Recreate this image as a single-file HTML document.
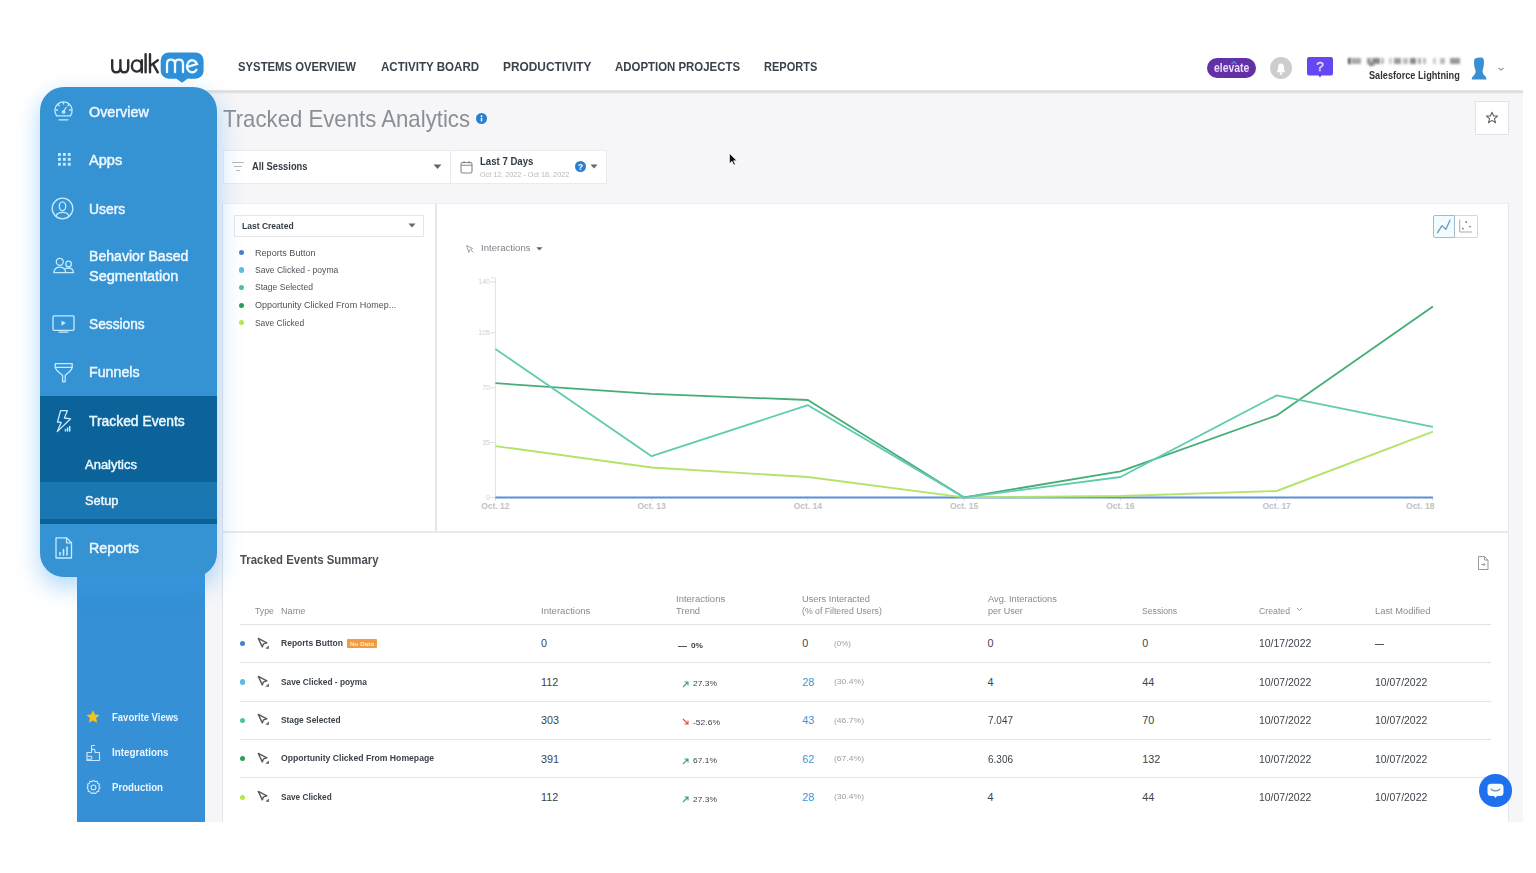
<!DOCTYPE html>
<html><head><meta charset="utf-8">
<style>
*{box-sizing:border-box;margin:0;padding:0}
html,body{width:1536px;height:873px;overflow:hidden;background:#fff;font-family:"Liberation Sans",sans-serif}
.a{position:absolute;white-space:nowrap}
</style></head><body>
<div class="a" style="left:0px;top:0px;width:1536px;height:873px;background:#fff;"></div>
<div class="a" style="left:205px;top:92px;width:1318px;height:730px;background:#f6f5f8;"></div>
<div class="a" style="left:77px;top:90px;width:1446px;height:4px;background:linear-gradient(#e9e9e9,#dcdcdc 45%,#e6e6e6 70%,#f3f3f5);"></div>
<div class="a" style="left:77px;top:92px;width:128px;height:730px;background:#3590d5;"></div>
<svg class="a" style="left:0;top:0" width="220" height="90" viewBox="0 0 220 90">
 <g fill="none" stroke="#2e2e32" stroke-width="2.4" stroke-linecap="round">
  <path d="M112.2 60.2V67.4Q112.2 72.3 116.3 72.3Q120.4 72.3 120.4 67.4V60.2M120.4 67.4Q120.4 72.3 124.3 72.3Q128.2 72.3 128.2 67.4V60.2"/>
  <ellipse cx="136.8" cy="66" rx="4.9" ry="5.6"/>
  <path d="M141.8 60.2V72.3M145.6 54.2V72.3M150 54.2V72.3M150.4 65.6L157.8 60.2M153.3 64.4L157.8 72.3"/>
 </g>
 <path d="M169 52.4H195.6A8 8 0 0 1 203.6 60.4V70.7A8 8 0 0 1 195.6 78.7H187.5L182 82.8L176.5 78.7H168.7A8 8 0 0 1 160.7 70.7V60.4A8 8 0 0 1 168.7 52.4Z" fill="#2f8fd8"/>
 <g fill="none" stroke="#eefaff" stroke-width="2.3" stroke-linecap="round">
  <path d="M167 72.2V63.8Q167 59.6 171 59.6Q175 59.6 175 63.8V72.2M175 63.8Q175 59.6 179 59.6Q183 59.6 183 63.8V72.2"/>
  <path d="M187.4 66.8L197 64A5.2 6 0 1 0 196.4 69.8"/>
 </g>
</svg>
<div id="t1" class="a" style="left:238.1px;top:59.6px;font-size:13px;line-height:13px;color:#3a434d;font-weight:bold;transform:scaleX(0.8703);transform-origin:0 0;">SYSTEMS OVERVIEW</div>
<div id="t2" class="a" style="left:380.6px;top:59.6px;font-size:13px;line-height:13px;color:#3a434d;font-weight:bold;transform:scaleX(0.8906);transform-origin:0 0;">ACTIVITY BOARD</div>
<div id="t3" class="a" style="left:502.7px;top:59.6px;font-size:13px;line-height:13px;color:#3a434d;font-weight:bold;transform:scaleX(0.9143);transform-origin:0 0;">PRODUCTIVITY</div>
<div id="t4" class="a" style="left:615.0px;top:59.6px;font-size:13px;line-height:13px;color:#3a434d;font-weight:bold;transform:scaleX(0.8784);transform-origin:0 0;">ADOPTION PROJECTS</div>
<div id="t5" class="a" style="left:764.4px;top:59.6px;font-size:13px;line-height:13px;color:#3a434d;font-weight:bold;transform:scaleX(0.8481);transform-origin:0 0;">REPORTS</div>
<div class="a" style="left:1207px;top:58px;width:49px;height:20px;border-radius:10px;background:#6330a6"></div>
<div id="t6" class="a" style="left:1214.1px;top:60.5px;font-size:13.5px;line-height:13.5px;color:#e9dcff;font-weight:bold;transform:scaleX(0.7730);transform-origin:0 0;">elevate</div>
<svg class="a" style="left:1230px;top:60px" width="8" height="5" viewBox="0 0 8 5"><path d="M1.5 4L4 1.5L6.5 4" fill="none" stroke="#4a8ff0" stroke-width="1.2"/></svg>
<div class="a" style="left:1270px;top:57px;width:22px;height:22px;border-radius:50%;background:#cdcdcd"></div>
<svg class="a" style="left:1270px;top:57px" width="22" height="22" viewBox="0 0 22 22"><path d="M6.8 15.2Q8 13.8 8 10.5Q8 6.6 11 6.6Q14 6.6 14 10.5Q14 13.8 15.2 15.2Z" fill="#fff"/><circle cx="11" cy="16.6" r="1.3" fill="#fff"/></svg>
<svg class="a" style="left:1306px;top:56px" width="28" height="23" viewBox="0 0 28 23"><path d="M3 1H25Q27 1 27 3V17.5Q27 19.5 25 19.5H15.5L14 21.5L12.5 19.5H3Q1 19.5 1 17.5V3Q1 1 3 1Z" fill="#6747f2"/><text x="14" y="15" fill="#e8e2ff" font-family="Liberation Sans" font-size="13.5" text-anchor="middle" stroke="#e8e2ff" stroke-width="0.3">?</text></svg>
<div class="a" style="left:1348px;top:57.5px;width:3px;height:6.5px;filter:blur(1px);background:#555"></div>
<div class="a" style="left:1351px;top:57.5px;width:10px;height:6.5px;filter:blur(1px);background:#aaa"></div>
<div class="a" style="left:1367px;top:57.5px;width:4px;height:6.5px;filter:blur(1px);background:#999"></div>
<div class="a" style="left:1372px;top:57.5px;width:8px;height:6.5px;filter:blur(1px);background:#888"></div>
<div class="a" style="left:1381px;top:57.5px;width:3px;height:6.5px;filter:blur(1px);background:#bbb"></div>
<div class="a" style="left:1389px;top:57.5px;width:3px;height:6.5px;filter:blur(1px);background:#ccc"></div>
<div class="a" style="left:1394px;top:57.5px;width:7px;height:6.5px;filter:blur(1px);background:#999"></div>
<div class="a" style="left:1403px;top:57.5px;width:5px;height:6.5px;filter:blur(1px);background:#bbb"></div>
<div class="a" style="left:1410px;top:57.5px;width:6px;height:6.5px;filter:blur(1px);background:#888"></div>
<div class="a" style="left:1418px;top:57.5px;width:3px;height:6.5px;filter:blur(1px);background:#aaa"></div>
<div class="a" style="left:1423px;top:57.5px;width:3px;height:6.5px;filter:blur(1px);background:#bbb"></div>
<div class="a" style="left:1433px;top:57.5px;width:3px;height:6.5px;filter:blur(1px);background:#ccc"></div>
<div class="a" style="left:1440px;top:57.5px;width:5px;height:6.5px;filter:blur(1px);background:#bbb"></div>
<div class="a" style="left:1450px;top:57.5px;width:10px;height:6.5px;filter:blur(1px);background:#999"></div>
<div class="a" style="left:1369px;top:62px;width:5px;height:4px;filter:blur(1px);background:#888"></div>
<div id="t7" class="a" style="left:1368.7px;top:71.1px;font-size:10px;line-height:10px;color:#333;font-weight:bold;transform:scaleX(0.9180);transform-origin:0 0;">Salesforce Lightning</div>
<svg class="a" style="left:1468px;top:55px" width="22" height="26" viewBox="0 0 22 26"><path d="M6.5 4Q9 2.4 13.5 2.6Q16.2 3 16 7.5Q15.8 12.5 14.6 15.5Q14.4 18.5 16 20Q18.5 21.5 18.6 24.6H3.6Q3.8 21.5 6.2 20Q8 18.5 7.6 15.5Q6 12.5 6 8Q6 5 6.5 4Z" fill="#3a8fd3"/></svg>
<svg class="a" style="left:1497px;top:66px" width="8" height="6" viewBox="0 0 8 6"><path d="M1.5 2L4 4L6.5 2" fill="none" stroke="#999" stroke-width="1.1"/></svg>
<div id="t8" class="a" style="left:223.2px;top:106.6px;font-size:24px;line-height:24px;color:#8a8f96;font-weight:normal;transform:scaleX(0.9243);transform-origin:0 0;">Tracked Events Analytics</div>
<div class="a" style="left:475.5px;top:112.8px;width:11px;height:11px;border-radius:50%;background:#2a7fd0"></div>
<svg class="a" style="left:475.5px;top:112.8px" width="11" height="11" viewBox="0 0 11 11"><circle cx="5.5" cy="3.2" r="0.9" fill="#fff"/><path d="M5.5 4.8V8.4" stroke="#fff" stroke-width="1.5"/></svg>
<div class="a" style="left:1475px;top:100.5px;width:34px;height:34.5px;background:#fff;border:1px solid #e2e2e6"></div>
<svg class="a" style="left:1484px;top:110px" width="16" height="16" viewBox="0 0 16 16"><path d="M8 2.2L9.6 6H13.6L10.4 8.6L11.6 12.8L8 10.4L4.4 12.8L5.6 8.6L2.4 6H6.4Z" fill="none" stroke="#666" stroke-width="1.1" stroke-linejoin="round"/></svg>
<div class="a" style="left:223px;top:150px;width:383.5px;height:33.5px;background:#fff;border:1px solid #ebeaee"></div>
<div class="a" style="left:450px;top:150px;width:1px;height:33.5px;background:#ebeaee;"></div>
<svg class="a" style="left:230px;top:160px" width="16" height="14" viewBox="0 0 16 14"><path d="M2 2.5H14M4 6.5H12M6 10.5H10" stroke="#b8b8b8" stroke-width="1.2"/></svg>
<div id="t9" class="a" style="left:251.5px;top:161.3px;font-size:11px;line-height:11px;color:#333b45;font-weight:bold;transform:scaleX(0.8483);transform-origin:0 0;">All Sessions</div>
<svg class="a" style="left:433px;top:164px" width="9" height="6" viewBox="0 0 9 6"><path d="M0.5 0.5H8.5L4.5 5Z" fill="#666"/></svg>
<svg class="a" style="left:460px;top:160px" width="13" height="14" viewBox="0 0 13 14"><rect x="1" y="2.5" width="11" height="10.5" rx="1.5" fill="none" stroke="#888" stroke-width="1.1"/><path d="M1 5.2H12M4 1V3.5M9 1V3.5" stroke="#888" stroke-width="1.1"/></svg>
<div id="t10" class="a" style="left:479.7px;top:156.9px;font-size:10px;line-height:10px;color:#333b45;font-weight:bold;transform:scaleX(0.9605);transform-origin:0 0;">Last 7 Days</div>
<div id="t11" class="a" style="left:479.7px;top:170.9px;font-size:7px;line-height:7px;color:#b8b8b8;font-weight:normal;transform:scaleX(1.0325);transform-origin:0 0;">Oct 12, 2022 - Oct 18, 2022</div>
<div class="a" style="left:574.8px;top:161.2px;width:11px;height:11px;border-radius:50%;background:#2a7fd0"></div>
<div id="t12" class="a" style="left:577.8px;top:162.8px;font-size:8.5px;line-height:8.5px;color:#fff;font-weight:bold;">?</div>
<svg class="a" style="left:590px;top:164px" width="8" height="5" viewBox="0 0 8 5"><path d="M0.5 0.5H7.5L4 4.5Z" fill="#666"/></svg>
<svg class="a" style="left:728px;top:152px" width="10" height="14" viewBox="0 0 10 14"><path d="M1.5 1.5V11.5L4 9.2L5.8 13L7.3 12.3L5.6 8.7H8.8Z" fill="#111" stroke="#fff" stroke-width="0.6"/></svg>
<div class="a" style="left:222px;top:203px;width:1287px;height:619px;background:#fff;border-left:1px solid #e4e3e8;border-top:1px solid #eeedf1;border-right:1px solid #e8e7ec"></div>
<div class="a" style="left:435px;top:203px;width:1.5px;height:329px;background:#e6e5ea;"></div>
<div class="a" style="left:222px;top:531px;width:1287px;height:1.5px;background:#e9e9eb;"></div>
<div class="a" style="left:233.7px;top:214.7px;width:190.4px;height:22px;background:#fff;border:1px solid #e6e6ea"></div>
<div id="t13" class="a" style="left:242.2px;top:221.1px;font-size:9.5px;line-height:9.5px;color:#333b45;font-weight:bold;transform:scaleX(0.8964);transform-origin:0 0;">Last Created</div>
<svg class="a" style="left:408px;top:223px" width="8" height="5" viewBox="0 0 8 5"><path d="M0.5 0.5H7.5L4 4.5Z" fill="#666"/></svg>
<div class="a" style="left:238.8px;top:250.0px;width:5.4px;height:5.4px;border-radius:50%;background:#4a7fc8"></div>
<div id="t14" class="a" style="left:254.8px;top:248.6px;font-size:8.5px;line-height:8.5px;color:#4b525a;font-weight:normal;transform:scaleX(1.0687);transform-origin:0 0;">Reports Button</div>
<div class="a" style="left:238.8px;top:267.4px;width:5.4px;height:5.4px;border-radius:50%;background:#5bbde0"></div>
<div id="t15" class="a" style="left:254.8px;top:266.0px;font-size:8.5px;line-height:8.5px;color:#4b525a;font-weight:normal;transform:scaleX(1.0076);transform-origin:0 0;">Save Clicked - poyma</div>
<div class="a" style="left:238.8px;top:284.7px;width:5.4px;height:5.4px;border-radius:50%;background:#4cc39e"></div>
<div id="t16" class="a" style="left:254.8px;top:283.3px;font-size:8.5px;line-height:8.5px;color:#4b525a;font-weight:normal;transform:scaleX(1.0060);transform-origin:0 0;">Stage Selected</div>
<div class="a" style="left:238.8px;top:302.6px;width:5.4px;height:5.4px;border-radius:50%;background:#2e9d5c"></div>
<div id="t17" class="a" style="left:254.8px;top:301.2px;font-size:8.5px;line-height:8.5px;color:#4b525a;font-weight:normal;transform:scaleX(1.0599);transform-origin:0 0;">Opportunity Clicked From Homep...</div>
<div class="a" style="left:238.8px;top:320.0px;width:5.4px;height:5.4px;border-radius:50%;background:#b7e64a"></div>
<div id="t18" class="a" style="left:254.8px;top:318.6px;font-size:8.5px;line-height:8.5px;color:#4b525a;font-weight:normal;transform:scaleX(0.9917);transform-origin:0 0;">Save Clicked</div>
<svg class="a" style="left:465px;top:244px" width="11" height="10" viewBox="0 0 11 10"><path d="M1.5 1.5L7.5 4.5L5 5.5L3.8 8.5Z M6 6L8.5 8.5" fill="none" stroke="#9a9a9a" stroke-width="0.9" stroke-linejoin="round"/></svg>
<div id="t19" class="a" style="left:480.8px;top:244.4px;font-size:9px;line-height:9px;color:#7d838a;font-weight:normal;transform:scaleX(1.0638);transform-origin:0 0;">Interactions</div>
<svg class="a" style="left:536px;top:246.5px" width="7" height="4" viewBox="0 0 7 4"><path d="M0.3 0.3H6.5L3.4 3.6Z" fill="#666"/></svg>
<div class="a" style="left:1432.8px;top:215px;width:22.4px;height:22.6px;background:#f2fbff;border:1.3px solid #a3bccd;border-radius:2px 0 0 2px"></div>
<div class="a" style="left:1455px;top:215px;width:22.6px;height:22.6px;background:#fff;border:1.3px solid #d6d6d9;border-left:none;border-radius:0 2px 2px 0"></div>
<svg class="a" style="left:1430px;top:213px" width="50" height="28" viewBox="1430 213 50 28"><path d="M1437.6 232.6L1442 225.6L1445.8 229.4L1450 220.2" fill="none" stroke="#6d98b8" stroke-width="1.3" stroke-linecap="round" stroke-linejoin="round"/><path d="M1459.7 219.6V232H1472" fill="none" stroke="#aaa" stroke-width="1"/><circle cx="1466.2" cy="222" r="0.9" fill="#777"/><circle cx="1462.8" cy="228.7" r="0.9" fill="#777"/><circle cx="1469.9" cy="226.6" r="0.9" fill="#777"/></svg>
<svg class="a" style="left:436px;top:260px" width="1073" height="270" viewBox="436 260 1073 270"><path d="M495.4 277.8V497.4M491 277.8H495.4" stroke="#e2e2e2" stroke-width="1" fill="none"/><path d="M490.5 281.9H495.4" stroke="#ddd" stroke-width="1"/><path d="M490.5 332.9H495.4" stroke="#ddd" stroke-width="1"/><path d="M490.5 387.8H495.4" stroke="#ddd" stroke-width="1"/><path d="M490.5 442.5H495.4" stroke="#ddd" stroke-width="1"/><path d="M490.5 497.4H495.4" stroke="#ddd" stroke-width="1"/><path d="M495.4 497.4V501" stroke="#ddd" stroke-width="1"/><path d="M651.6 497.4V501" stroke="#ddd" stroke-width="1"/><path d="M807.9 497.4V501" stroke="#ddd" stroke-width="1"/><path d="M964.1 497.4V501" stroke="#ddd" stroke-width="1"/><path d="M1120.4 497.4V501" stroke="#ddd" stroke-width="1"/><path d="M1276.7 497.4V501" stroke="#ddd" stroke-width="1"/><path d="M1432.9 497.4V501" stroke="#ddd" stroke-width="1"/><polyline points="495.4,497.4 651.6,497.4 807.9,497.4 964.1,497.4 1120.4,497.4 1276.7,497.4 1432.9,497.4" fill="none" stroke="#5b8fd6" stroke-width="2" stroke-linejoin="round"/><polyline points="495.4,446.1 651.6,467.5 807.9,477.0 964.1,497.4 1120.4,496.0 1276.7,491.0 1432.9,431.7" fill="none" stroke="#b3e46a" stroke-width="1.9" stroke-linejoin="round"/><polyline points="495.4,383.2 651.6,393.9 807.9,400.0 964.1,497.4 1120.4,471.4 1276.7,415.4 1432.9,306.6" fill="none" stroke="#46ad76" stroke-width="1.8" stroke-linejoin="round"/><polyline points="495.4,349.0 651.6,456.2 807.9,405.2 964.1,497.4 1120.4,477.0 1276.7,395.4 1432.9,426.8" fill="none" stroke="#60cbae" stroke-width="1.8" stroke-linejoin="round"/></svg>
<div class="a" style="left:450px;top:277.4px;width:40px;text-align:right;font-size:7px;line-height:9px;color:#cfcfcf">140</div>
<div class="a" style="left:450px;top:328.4px;width:40px;text-align:right;font-size:7px;line-height:9px;color:#cfcfcf">105</div>
<div class="a" style="left:450px;top:383.3px;width:40px;text-align:right;font-size:7px;line-height:9px;color:#cfcfcf">70</div>
<div class="a" style="left:450px;top:438.0px;width:40px;text-align:right;font-size:7px;line-height:9px;color:#cfcfcf">35</div>
<div class="a" style="left:450px;top:492.9px;width:40px;text-align:right;font-size:7px;line-height:9px;color:#cfcfcf">0</div>
<div class="a" style="left:465.4px;top:500.5px;width:60px;text-align:center;font-size:8.5px;line-height:11px;color:#c2c2c6;font-weight:bold">Oct. 12</div>
<div class="a" style="left:621.6px;top:500.5px;width:60px;text-align:center;font-size:8.5px;line-height:11px;color:#c2c2c6;font-weight:bold">Oct. 13</div>
<div class="a" style="left:777.9px;top:500.5px;width:60px;text-align:center;font-size:8.5px;line-height:11px;color:#c2c2c6;font-weight:bold">Oct. 14</div>
<div class="a" style="left:934.1px;top:500.5px;width:60px;text-align:center;font-size:8.5px;line-height:11px;color:#c2c2c6;font-weight:bold">Oct. 15</div>
<div class="a" style="left:1090.4px;top:500.5px;width:60px;text-align:center;font-size:8.5px;line-height:11px;color:#c2c2c6;font-weight:bold">Oct. 16</div>
<div class="a" style="left:1246.7px;top:500.5px;width:60px;text-align:center;font-size:8.5px;line-height:11px;color:#c2c2c6;font-weight:bold">Oct. 17</div>
<div class="a" style="left:1374.4px;top:500.5px;width:60px;text-align:right;font-size:8.5px;line-height:11px;color:#c2c2c6;font-weight:bold">Oct. 18</div>
<div id="t20" class="a" style="left:240.4px;top:553.1px;font-size:13px;line-height:13px;color:#4a4f56;font-weight:bold;transform:scaleX(0.8758);transform-origin:0 0;">Tracked Events Summary</div>
<svg class="a" style="left:1475px;top:555px" width="16" height="16" viewBox="0 0 16 16"><path d="M3.5 1.5H9.5L13 5V14.5H3.5Z M9.5 1.5V5H13" fill="none" stroke="#999" stroke-width="1"/><path d="M6 9.5H10M8.5 8L10 9.5L8.5 11" fill="none" stroke="#999" stroke-width="0.9"/></svg>
<div id="t21" class="a" style="left:254.5px;top:606.9px;font-size:8.5px;line-height:8.5px;color:#858b92;font-weight:normal;transform:scaleX(1.0305);transform-origin:0 0;">Type</div>
<div id="t22" class="a" style="left:280.8px;top:606.9px;font-size:8.5px;line-height:8.5px;color:#858b92;font-weight:normal;transform:scaleX(1.0711);transform-origin:0 0;">Name</div>
<div id="t23" class="a" style="left:541.0px;top:606.9px;font-size:8.5px;line-height:8.5px;color:#858b92;font-weight:normal;transform:scaleX(1.1216);transform-origin:0 0;">Interactions</div>
<div id="t24" class="a" style="left:676.4px;top:594.9px;font-size:8.5px;line-height:8.5px;color:#858b92;font-weight:normal;transform:scaleX(1.1194);transform-origin:0 0;">Interactions</div>
<div id="t25" class="a" style="left:676.4px;top:606.9px;font-size:8.5px;line-height:8.5px;color:#858b92;font-weight:normal;transform:scaleX(1.0964);transform-origin:0 0;">Trend</div>
<div id="t26" class="a" style="left:802.2px;top:594.9px;font-size:8.5px;line-height:8.5px;color:#858b92;font-weight:normal;transform:scaleX(1.0870);transform-origin:0 0;">Users Interacted</div>
<div id="t27" class="a" style="left:802.2px;top:606.9px;font-size:8.5px;line-height:8.5px;color:#858b92;font-weight:normal;transform:scaleX(1.0239);transform-origin:0 0;">(% of Filtered Users)</div>
<div id="t28" class="a" style="left:987.5px;top:594.9px;font-size:8.5px;line-height:8.5px;color:#858b92;font-weight:normal;transform:scaleX(1.0907);transform-origin:0 0;">Avg. Interactions</div>
<div id="t29" class="a" style="left:987.5px;top:606.9px;font-size:8.5px;line-height:8.5px;color:#858b92;font-weight:normal;transform:scaleX(1.0677);transform-origin:0 0;">per User</div>
<div id="t30" class="a" style="left:1142.2px;top:606.9px;font-size:8.5px;line-height:8.5px;color:#858b92;font-weight:normal;transform:scaleX(1.0203);transform-origin:0 0;">Sessions</div>
<div id="t31" class="a" style="left:1258.6px;top:606.9px;font-size:8.5px;line-height:8.5px;color:#858b92;font-weight:normal;transform:scaleX(1.0248);transform-origin:0 0;">Created</div>
<div id="t32" class="a" style="left:1374.9px;top:606.9px;font-size:8.5px;line-height:8.5px;color:#858b92;font-weight:normal;transform:scaleX(1.0977);transform-origin:0 0;">Last Modified</div>
<svg class="a" style="left:1296px;top:607px" width="7" height="5" viewBox="0 0 7 5"><path d="M1 1L3.5 3.5L6 1" fill="none" stroke="#999" stroke-width="1"/></svg>
<div class="a" style="left:240px;top:624px;width:1251px;height:1px;background:#e3e3e6;"></div>
<div class="a" style="left:240px;top:662px;width:1251px;height:1px;background:#e3e3e6;"></div>
<div class="a" style="left:240px;top:701px;width:1251px;height:1px;background:#e3e3e6;"></div>
<div class="a" style="left:240px;top:739px;width:1251px;height:1px;background:#e3e3e6;"></div>
<div class="a" style="left:240px;top:777px;width:1251px;height:1px;background:#e3e3e6;"></div>
<div class="a" style="left:240px;top:640.9px;width:5.4px;height:5.4px;border-radius:50%;background:#4a7fc8"></div>
<svg class="a" style="left:256px;top:636.5px" width="15" height="13" viewBox="0 0 15 13"><path d="M2.3 1.4L10.9 5.8L7.5 6.8L6.3 9.9Z" fill="none" stroke="#5a5a5a" stroke-width="1.4" stroke-linejoin="round"/><path d="M9.3 11.6L13 8.4L12.8 12.1Z" fill="#666"/></svg>
<div id="t33" class="a" style="left:280.9px;top:639.2px;font-size:8.5px;line-height:8.5px;color:#3c434b;font-weight:bold;transform:scaleX(1.0023);transform-origin:0 0;">Reports Button</div>
<div class="a" style="left:346.8px;top:638.8px;width:30.4px;height:9.6px;background:#f29a40;border-radius:1px"></div>
<div id="t34" class="a" style="left:350.0px;top:641.1px;font-size:6px;line-height:6px;color:#ffe9cf;font-weight:bold;transform:scaleX(1.0586);transform-origin:0 0;">No Data</div>
<div id="t35" class="a" style="left:541.0px;top:638.3px;font-size:10.8px;line-height:10.8px;color:#3c434b;font-weight:normal;">0</div>
<div class="a" style="left:677.8px;top:645.7px;width:9px;height:1px;background:#555;"></div>
<div id="t36" class="a" style="left:690.5px;top:642.2px;font-size:7.5px;line-height:7.5px;color:#3c434b;font-weight:bold;transform:scaleX(1.1066);transform-origin:0 0;">0%</div>
<div id="t37" class="a" style="left:802.2px;top:638.3px;font-size:10.8px;line-height:10.8px;color:#3c434b;font-weight:normal;">0</div>
<div id="t38" class="a" style="left:833.8px;top:639.8px;font-size:7.5px;line-height:7.5px;color:#9a9fa5;font-weight:normal;transform:scaleX(1.0730);transform-origin:0 0;">(0%)</div>
<div id="t39" class="a" style="left:987.5px;top:638.3px;font-size:10.8px;line-height:10.8px;color:#3c434b;font-weight:normal;">0</div>
<div id="t40" class="a" style="left:1142.2px;top:638.3px;font-size:10.8px;line-height:10.8px;color:#3c434b;font-weight:normal;">0</div>
<div id="t41" class="a" style="left:1258.7px;top:638.3px;font-size:10.8px;line-height:10.8px;color:#3c434b;font-weight:normal;transform:scaleX(0.9677);transform-origin:0 0;">10/17/2022</div>
<div class="a" style="left:1375px;top:643.5px;width:9px;height:1.2px;background:#555;"></div>
<div class="a" style="left:240px;top:679.3px;width:5.4px;height:5.4px;border-radius:50%;background:#5bbde0"></div>
<svg class="a" style="left:256px;top:674.9px" width="15" height="13" viewBox="0 0 15 13"><path d="M2.3 1.4L10.9 5.8L7.5 6.8L6.3 9.9Z" fill="none" stroke="#5a5a5a" stroke-width="1.4" stroke-linejoin="round"/><path d="M9.3 11.6L13 8.4L12.8 12.1Z" fill="#666"/></svg>
<div id="t42" class="a" style="left:280.9px;top:677.6px;font-size:8.5px;line-height:8.5px;color:#3c434b;font-weight:bold;transform:scaleX(0.9816);transform-origin:0 0;">Save Clicked - poyma</div>
<div id="t43" class="a" style="left:541.0px;top:676.7px;font-size:10.8px;line-height:10.8px;color:#3c434b;font-weight:normal;">112</div>
<svg class="a" style="left:682px;top:679.9px" width="8" height="8" viewBox="0 0 8 8"><path d="M1 7L6 2M2.5 2H6V5.5" fill="none" stroke="#3ca36a" stroke-width="1.1"/></svg>
<div id="t44" class="a" style="left:693.3px;top:680.4px;font-size:8px;line-height:8px;color:#3c434b;font-weight:normal;transform:scaleX(1.0534);transform-origin:0 0;">27.3%</div>
<div id="t45" class="a" style="left:802.2px;top:676.7px;font-size:10.8px;line-height:10.8px;color:#3a98d6;font-weight:normal;">28</div>
<div id="t46" class="a" style="left:833.8px;top:678.2px;font-size:7.5px;line-height:7.5px;color:#9a9fa5;font-weight:normal;transform:scaleX(1.1422);transform-origin:0 0;">(30.4%)</div>
<div id="t47" class="a" style="left:987.5px;top:676.7px;font-size:10.8px;line-height:10.8px;color:#3c434b;font-weight:normal;">4</div>
<div id="t48" class="a" style="left:1142.2px;top:676.7px;font-size:10.8px;line-height:10.8px;color:#3c434b;font-weight:normal;">44</div>
<div id="t49" class="a" style="left:1258.7px;top:676.7px;font-size:10.8px;line-height:10.8px;color:#3c434b;font-weight:normal;transform:scaleX(0.9677);transform-origin:0 0;">10/07/2022</div>
<div id="t50" class="a" style="left:1374.9px;top:676.7px;font-size:10.8px;line-height:10.8px;color:#3c434b;font-weight:normal;transform:scaleX(0.9677);transform-origin:0 0;">10/07/2022</div>
<div class="a" style="left:240px;top:717.7px;width:5.4px;height:5.4px;border-radius:50%;background:#4cc39e"></div>
<svg class="a" style="left:256px;top:713.3px" width="15" height="13" viewBox="0 0 15 13"><path d="M2.3 1.4L10.9 5.8L7.5 6.8L6.3 9.9Z" fill="none" stroke="#5a5a5a" stroke-width="1.4" stroke-linejoin="round"/><path d="M9.3 11.6L13 8.4L12.8 12.1Z" fill="#666"/></svg>
<div id="t51" class="a" style="left:280.9px;top:716.0px;font-size:8.5px;line-height:8.5px;color:#3c434b;font-weight:bold;transform:scaleX(0.9837);transform-origin:0 0;">Stage Selected</div>
<div id="t52" class="a" style="left:541.0px;top:715.1px;font-size:10.8px;line-height:10.8px;color:#3c434b;font-weight:normal;">303</div>
<svg class="a" style="left:682px;top:718.3px" width="8" height="8" viewBox="0 0 8 8"><path d="M1 1L6 6M2.5 6H6V2.5" fill="none" stroke="#e0504a" stroke-width="1.1"/></svg>
<div id="t53" class="a" style="left:693.3px;top:718.8px;font-size:8px;line-height:8px;color:#3c434b;font-weight:normal;transform:scaleX(1.0647);transform-origin:0 0;">-52.6%</div>
<div id="t54" class="a" style="left:802.2px;top:715.1px;font-size:10.8px;line-height:10.8px;color:#3a98d6;font-weight:normal;">43</div>
<div id="t55" class="a" style="left:833.8px;top:716.6px;font-size:7.5px;line-height:7.5px;color:#9a9fa5;font-weight:normal;transform:scaleX(1.1422);transform-origin:0 0;">(46.7%)</div>
<div id="t56" class="a" style="left:987.5px;top:715.1px;font-size:10.8px;line-height:10.8px;color:#3c434b;font-weight:normal;transform:scaleX(0.9249);transform-origin:0 0;">7.047</div>
<div id="t57" class="a" style="left:1142.2px;top:715.1px;font-size:10.8px;line-height:10.8px;color:#3c434b;font-weight:normal;">70</div>
<div id="t58" class="a" style="left:1258.7px;top:715.1px;font-size:10.8px;line-height:10.8px;color:#3c434b;font-weight:normal;transform:scaleX(0.9677);transform-origin:0 0;">10/07/2022</div>
<div id="t59" class="a" style="left:1374.9px;top:715.1px;font-size:10.8px;line-height:10.8px;color:#3c434b;font-weight:normal;transform:scaleX(0.9677);transform-origin:0 0;">10/07/2022</div>
<div class="a" style="left:240px;top:756.1px;width:5.4px;height:5.4px;border-radius:50%;background:#2e9d5c"></div>
<svg class="a" style="left:256px;top:751.7px" width="15" height="13" viewBox="0 0 15 13"><path d="M2.3 1.4L10.9 5.8L7.5 6.8L6.3 9.9Z" fill="none" stroke="#5a5a5a" stroke-width="1.4" stroke-linejoin="round"/><path d="M9.3 11.6L13 8.4L12.8 12.1Z" fill="#666"/></svg>
<div id="t60" class="a" style="left:280.9px;top:754.4px;font-size:8.5px;line-height:8.5px;color:#3c434b;font-weight:bold;transform:scaleX(1.0156);transform-origin:0 0;">Opportunity Clicked From Homepage</div>
<div id="t61" class="a" style="left:541.0px;top:753.5px;font-size:10.8px;line-height:10.8px;color:#3c434b;font-weight:normal;">391</div>
<svg class="a" style="left:682px;top:756.7px" width="8" height="8" viewBox="0 0 8 8"><path d="M1 7L6 2M2.5 2H6V5.5" fill="none" stroke="#3ca36a" stroke-width="1.1"/></svg>
<div id="t62" class="a" style="left:693.3px;top:757.2px;font-size:8px;line-height:8px;color:#3c434b;font-weight:normal;transform:scaleX(1.0534);transform-origin:0 0;">67.1%</div>
<div id="t63" class="a" style="left:802.2px;top:753.5px;font-size:10.8px;line-height:10.8px;color:#3a98d6;font-weight:normal;">62</div>
<div id="t64" class="a" style="left:833.8px;top:755.0px;font-size:7.5px;line-height:7.5px;color:#9a9fa5;font-weight:normal;transform:scaleX(1.1422);transform-origin:0 0;">(67.4%)</div>
<div id="t65" class="a" style="left:987.5px;top:753.5px;font-size:10.8px;line-height:10.8px;color:#3c434b;font-weight:normal;transform:scaleX(0.9249);transform-origin:0 0;">6.306</div>
<div id="t66" class="a" style="left:1142.2px;top:753.5px;font-size:10.8px;line-height:10.8px;color:#3c434b;font-weight:normal;">132</div>
<div id="t67" class="a" style="left:1258.7px;top:753.5px;font-size:10.8px;line-height:10.8px;color:#3c434b;font-weight:normal;transform:scaleX(0.9677);transform-origin:0 0;">10/07/2022</div>
<div id="t68" class="a" style="left:1374.9px;top:753.5px;font-size:10.8px;line-height:10.8px;color:#3c434b;font-weight:normal;transform:scaleX(0.9677);transform-origin:0 0;">10/07/2022</div>
<div class="a" style="left:240px;top:794.5px;width:5.4px;height:5.4px;border-radius:50%;background:#b7e64a"></div>
<svg class="a" style="left:256px;top:790.1px" width="15" height="13" viewBox="0 0 15 13"><path d="M2.3 1.4L10.9 5.8L7.5 6.8L6.3 9.9Z" fill="none" stroke="#5a5a5a" stroke-width="1.4" stroke-linejoin="round"/><path d="M9.3 11.6L13 8.4L12.8 12.1Z" fill="#666"/></svg>
<div id="t69" class="a" style="left:280.9px;top:792.8px;font-size:8.5px;line-height:8.5px;color:#3c434b;font-weight:bold;transform:scaleX(0.9666);transform-origin:0 0;">Save Clicked</div>
<div id="t70" class="a" style="left:541.0px;top:791.9px;font-size:10.8px;line-height:10.8px;color:#3c434b;font-weight:normal;">112</div>
<svg class="a" style="left:682px;top:795.1px" width="8" height="8" viewBox="0 0 8 8"><path d="M1 7L6 2M2.5 2H6V5.5" fill="none" stroke="#3ca36a" stroke-width="1.1"/></svg>
<div id="t71" class="a" style="left:693.3px;top:795.6px;font-size:8px;line-height:8px;color:#3c434b;font-weight:normal;transform:scaleX(1.0534);transform-origin:0 0;">27.3%</div>
<div id="t72" class="a" style="left:802.2px;top:791.9px;font-size:10.8px;line-height:10.8px;color:#3a98d6;font-weight:normal;">28</div>
<div id="t73" class="a" style="left:833.8px;top:793.4px;font-size:7.5px;line-height:7.5px;color:#9a9fa5;font-weight:normal;transform:scaleX(1.1422);transform-origin:0 0;">(30.4%)</div>
<div id="t74" class="a" style="left:987.5px;top:791.9px;font-size:10.8px;line-height:10.8px;color:#3c434b;font-weight:normal;">4</div>
<div id="t75" class="a" style="left:1142.2px;top:791.9px;font-size:10.8px;line-height:10.8px;color:#3c434b;font-weight:normal;">44</div>
<div id="t76" class="a" style="left:1258.7px;top:791.9px;font-size:10.8px;line-height:10.8px;color:#3c434b;font-weight:normal;transform:scaleX(0.9677);transform-origin:0 0;">10/07/2022</div>
<div id="t77" class="a" style="left:1374.9px;top:791.9px;font-size:10.8px;line-height:10.8px;color:#3c434b;font-weight:normal;transform:scaleX(0.9677);transform-origin:0 0;">10/07/2022</div>
<div class="a" style="left:1479px;top:774.4px;width:32.5px;height:32.5px;border-radius:50%;background:#1f70ee"></div>
<svg class="a" style="left:1479px;top:774.4px" width="33" height="33" viewBox="0 0 33 33"><path d="M12 9.8H21A3.5 3.5 0 0 1 24.5 13.3V18.5A3.5 3.5 0 0 1 21 22H18L16.5 24L15 22H12A3.5 3.5 0 0 1 8.5 18.5V13.3A3.5 3.5 0 0 1 12 9.8Z" fill="#f4fbff"/><path d="M12.2 15.2Q16.5 18.6 20.8 15.2" fill="none" stroke="#7d8aa6" stroke-width="1.3" stroke-linecap="round"/></svg>
<svg class="a" style="left:85px;top:709px" width="16" height="16" viewBox="0 0 16 16"><path d="M8 1.2L10 5.6L14.6 6L11.1 9.1L12.1 13.8L8 11.4L3.9 13.8L4.9 9.1L1.4 6L6 5.6Z" fill="#f6c31a"/></svg>
<div id="t78" class="a" style="left:112.2px;top:712.1px;font-size:11px;line-height:11px;color:#eaf5ff;font-weight:bold;transform:scaleX(0.8641);transform-origin:0 0;">Favorite Views</div>
<svg class="a" style="left:85px;top:743px" width="17" height="19" viewBox="0 0 17 19"><path d="M2 9.5H6.5V7.5A1.8 1.8 0 0 1 10 7.5V9.5H14.5V17.5H2Z M2 13.2H5.5Q7 13.2 7 14.8Q7 16.2 5.5 16.2H2" fill="none" stroke="#cfe7fb" stroke-width="1.1" stroke-linejoin="round"/><path d="M6.5 2.5V7M6.5 2.5H10" fill="none" stroke="#cfe7fb" stroke-width="1.1"/></svg>
<div id="t79" class="a" style="left:112.2px;top:746.9px;font-size:11px;line-height:11px;color:#eaf5ff;font-weight:bold;transform:scaleX(0.8975);transform-origin:0 0;">Integrations</div>
<svg class="a" style="left:85px;top:779px" width="17" height="17" viewBox="0 0 17 17"><path d="M8.5 1.3L10 2.6L12 2.2L12.6 4.2L14.5 5.2L13.9 7.1L15 8.8L13.7 10.3L13.8 12.4L11.8 12.8L10.6 14.5L8.5 13.9L6.4 14.5L5.2 12.8L3.2 12.4L3.3 10.3L2 8.8L3.1 7.1L2.5 5.2L4.4 4.2L5 2.2L7 2.6Z" fill="none" stroke="#cfe7fb" stroke-width="1.1" stroke-linejoin="round"/><circle cx="8.5" cy="8.4" r="2.4" fill="none" stroke="#cfe7fb" stroke-width="1.1"/></svg>
<div id="t80" class="a" style="left:112.2px;top:782.3px;font-size:11px;line-height:11px;color:#eaf5ff;font-weight:bold;transform:scaleX(0.8784);transform-origin:0 0;">Production</div>
<div class="a" style="left:40px;top:87px;width:177px;height:490px;border-radius:24px;background:#3592d3;box-shadow:0 9px 22px 2px rgba(60,160,245,.36)"></div>
<div class="a" style="left:40px;top:396px;width:177px;height:86px;background:#0b6399;"></div>
<div class="a" style="left:40px;top:482px;width:177px;height:37px;background:#1a77b1;"></div>
<div class="a" style="left:40px;top:519px;width:177px;height:5px;background:#0c6196;"></div>
<div id="t81" class="a" style="left:88.7px;top:104.5px;font-size:14px;line-height:14px;color:#eef8ff;font-weight:normal;transform:scaleX(1.0247);transform-origin:0 0;-webkit-text-stroke:0.45px #eef8ff;">Overview</div>
<div id="t82" class="a" style="left:88.7px;top:152.8px;font-size:14px;line-height:14px;color:#eef8ff;font-weight:normal;transform:scaleX(1.0400);transform-origin:0 0;-webkit-text-stroke:0.45px #eef8ff;">Apps</div>
<div id="t83" class="a" style="left:88.7px;top:201.8px;font-size:14px;line-height:14px;color:#eef8ff;font-weight:normal;transform:scaleX(0.9901);transform-origin:0 0;-webkit-text-stroke:0.45px #eef8ff;">Users</div>
<div id="t84" class="a" style="left:88.7px;top:249.4px;font-size:14px;line-height:14px;color:#eef8ff;font-weight:normal;transform:scaleX(1.0056);transform-origin:0 0;-webkit-text-stroke:0.45px #eef8ff;">Behavior Based</div>
<div id="t85" class="a" style="left:88.7px;top:269.2px;font-size:14px;line-height:14px;color:#eef8ff;font-weight:normal;transform:scaleX(1.0346);transform-origin:0 0;-webkit-text-stroke:0.45px #eef8ff;">Segmentation</div>
<div id="t86" class="a" style="left:88.7px;top:316.9px;font-size:14px;line-height:14px;color:#eef8ff;font-weight:normal;transform:scaleX(0.9804);transform-origin:0 0;-webkit-text-stroke:0.45px #eef8ff;">Sessions</div>
<div id="t87" class="a" style="left:88.7px;top:365.3px;font-size:14px;line-height:14px;color:#eef8ff;font-weight:normal;transform:scaleX(1.0158);transform-origin:0 0;-webkit-text-stroke:0.45px #eef8ff;">Funnels</div>
<div id="t88" class="a" style="left:88.7px;top:413.9px;font-size:14px;line-height:14px;color:#eef8ff;font-weight:normal;transform:scaleX(0.9902);transform-origin:0 0;-webkit-text-stroke:0.45px #eef8ff;">Tracked Events</div>
<div id="t89" class="a" style="left:88.7px;top:541.4px;font-size:14px;line-height:14px;color:#eef8ff;font-weight:normal;transform:scaleX(1.0198);transform-origin:0 0;-webkit-text-stroke:0.45px #eef8ff;">Reports</div>
<div id="t90" class="a" style="left:84.9px;top:458.1px;font-size:13.5px;line-height:13.5px;color:#eef8ff;font-weight:normal;transform:scaleX(0.9624);transform-origin:0 0;-webkit-text-stroke:0.45px #eef8ff;">Analytics</div>
<div id="t91" class="a" style="left:84.9px;top:494.2px;font-size:13.5px;line-height:13.5px;color:#eef8ff;font-weight:normal;transform:scaleX(0.9495);transform-origin:0 0;-webkit-text-stroke:0.45px #eef8ff;">Setup</div>
<svg class="a" style="left:52px;top:98px" width="23" height="25" viewBox="0 0 23 25" fill="none" stroke="#c4ebff" stroke-width="1.3" stroke-linecap="round" stroke-linejoin="round"><path d="M4.5 17.5A8.6 8.6 0 1 1 18.5 17.5"/><path d="M4.5 17.8H18.5M7 21.8H16"/><path d="M11.5 13.8L14 9.5"/><circle cx="11.5" cy="14" r="1.2"/><path d="M11.5 4.5V6M6.2 6.8L7.2 7.8M16.8 6.8L15.8 7.8M4 12H5.5M19 12H17.5"/></svg>
<svg class="a" style="left:57px;top:152px" width="16" height="16" viewBox="0 0 16 16" fill="none" stroke="#c4ebff" stroke-width="1.3" stroke-linecap="round" stroke-linejoin="round"><rect x="1.0" y="1.0" width="2.9" height="2.9" fill="#c4ebff" stroke="none"/><rect x="1.0" y="5.9" width="2.9" height="2.9" fill="#c4ebff" stroke="none"/><rect x="1.0" y="10.8" width="2.9" height="2.9" fill="#c4ebff" stroke="none"/><rect x="5.9" y="1.0" width="2.9" height="2.9" fill="#c4ebff" stroke="none"/><rect x="5.9" y="5.9" width="2.9" height="2.9" fill="#c4ebff" stroke="none"/><rect x="5.9" y="10.8" width="2.9" height="2.9" fill="#c4ebff" stroke="none"/><rect x="10.8" y="1.0" width="2.9" height="2.9" fill="#c4ebff" stroke="none"/><rect x="10.8" y="5.9" width="2.9" height="2.9" fill="#c4ebff" stroke="none"/><rect x="10.8" y="10.8" width="2.9" height="2.9" fill="#c4ebff" stroke="none"/></svg>
<svg class="a" style="left:50px;top:196px" width="25" height="25" viewBox="0 0 25 25" fill="none" stroke="#c4ebff" stroke-width="1.3" stroke-linecap="round" stroke-linejoin="round"><circle cx="12.5" cy="12.5" r="10.3"/><ellipse cx="12.5" cy="10.2" rx="3.2" ry="4.4"/><path d="M5.8 20.2Q7.5 16.4 12.5 16.4Q17.5 16.4 19.2 20.2"/></svg>
<svg class="a" style="left:52px;top:256px" width="24" height="19" viewBox="0 0 24 19" fill="none" stroke="#c4ebff" stroke-width="1.3" stroke-linecap="round" stroke-linejoin="round"><circle cx="7.8" cy="5.8" r="3.5"/><path d="M1.8 16.6Q2.5 11.2 7.8 11.2Q13 11.2 13.8 16.6Z"/><circle cx="16.6" cy="8" r="2.8"/><path d="M13.6 12.4Q14.8 12 16.6 12Q21 12 21.6 16.6H13.8"/></svg>
<svg class="a" style="left:51px;top:314px" width="25" height="21" viewBox="0 0 25 21" fill="none" stroke="#c4ebff" stroke-width="1.3" stroke-linecap="round" stroke-linejoin="round"><rect x="2" y="1.8" width="21" height="14.5" rx="1"/><path d="M8 18.2H17"/><path d="M10.5 6.5V11.8L14.8 9.1Z" fill="#c4ebff" stroke="none"/></svg>
<svg class="a" style="left:53px;top:362px" width="22" height="22" viewBox="0 0 22 22" fill="none" stroke="#c4ebff" stroke-width="1.3" stroke-linecap="round" stroke-linejoin="round"><path d="M2.3 1.6H19.2V5.4Q18.8 8.5 12.2 13.2V19.4Q11 20.4 9.6 19.4V13.2Q2.8 8.5 2.3 5.4Z"/><path d="M2.3 5.4H19.2"/></svg>
<svg class="a" style="left:55px;top:409px" width="18" height="24" viewBox="0 0 18 24" fill="none" stroke="#c4ebff" stroke-width="1.3" stroke-linecap="round" stroke-linejoin="round"><path d="M5.6 1.6H12.4L9.4 9L15.6 9.8L2.3 22.6L6.2 13.4L2.5 13Z"/><path d="M10.5 22V20.5M12.6 22V19M14.7 22V17.5" stroke-width="1.5"/></svg>
<svg class="a" style="left:54px;top:536px" width="20" height="24" viewBox="0 0 20 24" fill="none" stroke="#c4ebff" stroke-width="1.3" stroke-linecap="round" stroke-linejoin="round"><path d="M2 1.8H12.5L17.5 6.8V22H2Z"/><path d="M12.5 1.8V6.8H17.5"/><path d="M6 19V16.5M9.5 19V13.5M13 19V11" stroke-width="1.6"/></svg>
</body></html>
